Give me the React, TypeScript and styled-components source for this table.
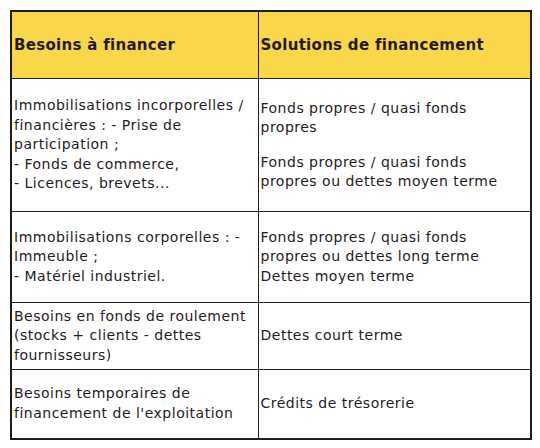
import React from 'react';
import styled, { createGlobalStyle } from 'styled-components';

const GlobalStyle = createGlobalStyle`
    html, body {
        margin: 0;
        padding: 0;
        background: #ffffff;
    }
`;

const Page = styled.div`
    width: 540px;
    height: 448px;
    padding: 10px 0 0 10px;
    box-sizing: border-box;
    font-family: "DejaVu Sans", Verdana, sans-serif;
    color: #1f1a24;
`;

const Table = styled.table`
    width: 520px;
    border-collapse: collapse;
    table-layout: fixed;
    border: 2px solid #1d1d1d;
`;

const HeadCell = styled.th`
    background: #f9d64a;
    border: 1.5px solid #1d1d1d;
    height: 66px;
    padding: 0 2px;
    text-align: left;
    vertical-align: middle;
    font-size: 15px;
    letter-spacing: 0.3px;
    font-weight: bold;
    color: #221a2c;
`;

const Row = styled.tr<{ $h: number }>`
    height: ${p => p.$h}px;
`;

const Cell = styled.td`
    border: 1.5px solid #1d1d1d;
    padding: 0 2px;
    vertical-align: middle;
    font-size: 14px;
    letter-spacing: 0.5px;
    line-height: 19.4px;
`;

const Para = styled.p`
    margin: 0 0 15px;

    &:last-child {
        margin-bottom: 0;
    }
`;

export default function App() {
    return (
        <Page>
            <GlobalStyle />
            <Table>
                <colgroup>
                    <col style={{ width: 247 }} />
                    <col style={{ width: 273 }} />
                </colgroup>
                <thead>
                    <tr>
                        <HeadCell>Besoins à financer</HeadCell>
                        <HeadCell>Solutions de financement</HeadCell>
                    </tr>
                </thead>
                <tbody>
                    <Row $h={133}>
                        <Cell>
                            Immobilisations incorporelles / financières : - Prise de participation ;<br />
                            - Fonds de commerce,<br />
                            - Licences, brevets...
                        </Cell>
                        <Cell>
                            <Para>Fonds propres / quasi fonds propres</Para>
                            <Para>Fonds propres / quasi fonds propres ou dettes moyen terme</Para>
                        </Cell>
                    </Row>
                    <Row $h={91}>
                        <Cell>
                            Immobilisations corporelles : - Immeuble ;<br />
                            - Matériel industriel.
                        </Cell>
                        <Cell>
                            Fonds propres / quasi fonds propres ou dettes long terme<br />
                            Dettes moyen terme
                        </Cell>
                    </Row>
                    <Row $h={67}>
                        <Cell>Besoins en fonds de roulement (stocks + clients - dettes fournisseurs)</Cell>
                        <Cell>Dettes court terme</Cell>
                    </Row>
                    <Row $h={69}>
                        <Cell>Besoins temporaires de financement de l'exploitation</Cell>
                        <Cell>Crédits de trésorerie</Cell>
                    </Row>
                </tbody>
            </Table>
        </Page>
    );
}
